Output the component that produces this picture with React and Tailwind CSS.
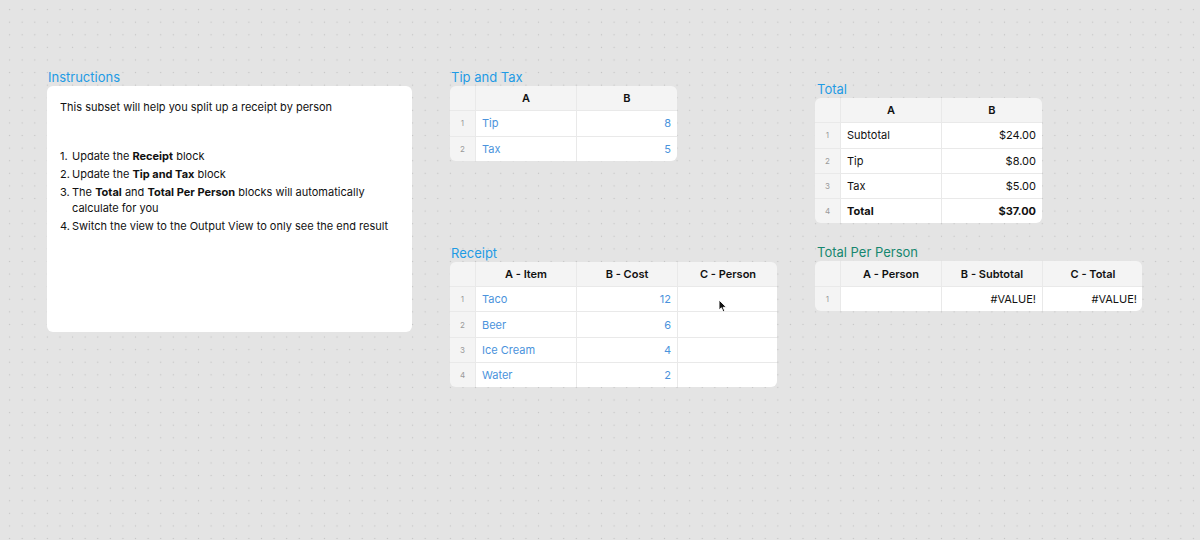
import React from 'react';

const BLUE = 'text-[#1f9be4]';

function Label({ children, color = BLUE, className = '' }) {
    return (
        <div className={`text-[13px] leading-4 h-[17px] ${color} ${className}`}>{children}</div>
    );
}

function Sheet({ cols, header, rows, gridCols, cursorAt }) {
    return (
        <div
            className={`grid ${gridCols} gap-px bg-[#e9e9e9] rounded-md overflow-hidden text-[11px] leading-4 relative`}
        >
            <div className="bg-[#f4f4f4] h-[24.3px]" />
            {header.map((h) => (
                <div key={h} className="bg-[#f4f4f4] h-[24.3px] flex items-center justify-center font-semibold text-[#111]">
                    {h}
                </div>
            ))}
            {rows.map((row, i) => (
                <React.Fragment key={i}>
                    <div className="bg-[#f4f4f4] h-[24.3px] flex items-center justify-center text-[8px] text-[#9a9a9a]">
                        {i + 1}
                    </div>
                    {row.map((cell, j) => (
                        <div
                            key={j}
                            className={`bg-white h-[24.3px] flex items-center px-1.5 ${
                                cols[j] === 'num' ? 'justify-end' : ''
                            } ${cell.tone === 'blue' ? 'text-[#4b93dc]' : 'text-[#111]'} ${
                                cell.bold ? 'font-bold' : ''
                            }`}
                        >
                            {cell.v}
                        </div>
                    ))}
                </React.Fragment>
            ))}
            {cursorAt && (
                <svg className="absolute" style={cursorAt} width="10" height="14" viewBox="0 0 10 14">
                    <path d="M1 1 L1 11 L3.4 8.8 L5.2 12.8 L6.8 12.1 L5.1 8.3 L8.4 8.3 Z" fill="#111" stroke="#fff" strokeWidth="0.9" />
                </svg>
            )}
        </div>
    );
}

const b = (v) => ({ v, tone: 'blue' });
const k = (v, bold) => ({ v, bold });

export default function App() {
    return (
        <div
            className="w-[1200px] h-[540px] bg-[#e4e4e4] overflow-hidden relative"
            style={{
                fontFamily: 'Inter, "Noto Sans", sans-serif',
                backgroundImage: 'radial-gradient(circle, #c4c4c4 0.7px, transparent 1px)',
                backgroundSize: '12.6px 12.6px',
                backgroundPosition: '3.3px 3.3px',
            }}
        >
            <div className="flex pt-[69px]">
                {/* column 1 */}
                <div className="ml-[47px] w-[365px]">
                    <Label className="pl-px">Instructions</Label>
                    <div className="bg-white rounded-md h-[246px] px-[13px] pt-[13px] text-[11px] leading-4 text-[#111]">
                        <p>This subset will help you split up a receipt by person</p>
                        <ol className="mt-[33px] flex flex-col gap-[2px]">
                            <li className="flex">
                                <span className="w-3 shrink-0">1.</span>
                                <span>Update the <b>Receipt</b> block</span>
                            </li>
                            <li className="flex">
                                <span className="w-3 shrink-0">2.</span>
                                <span>Update the <b>Tip and Tax</b> block</span>
                            </li>
                            <li className="flex">
                                <span className="w-3 shrink-0">3.</span>
                                <span>
                                    The <b>Total</b> and <b>Total Per Person</b> blocks will automatically
                                    <br />
                                    calculate for you
                                </span>
                            </li>
                            <li className="flex">
                                <span className="w-3 shrink-0">4.</span>
                                <span>Switch the view to the Output View to only see the end result</span>
                            </li>
                        </ol>
                    </div>
                </div>

                {/* column 2 */}
                <div className="ml-[38px] w-[327px]">
                    <Label className="pl-px">Tip and Tax</Label>
                    <div className="w-[227px]">
                        <Sheet
                            gridCols="grid-cols-[25px_100px_100px]"
                            cols={['text', 'num']}
                            header={['A', 'B']}
                            rows={[
                                [b('Tip'), b('8')],
                                [b('Tax'), b('5')],
                            ]}
                        />
                    </div>
                    <Label className="mt-[84px] pl-px">Receipt</Label>
                    <Sheet
                        gridCols="grid-cols-[25px_100px_100px_100px]"
                        cols={['text', 'num', 'text']}
                        header={['A - Item', 'B - Cost', 'C - Person']}
                        rows={[
                            [b('Taco'), b('12'), k('')],
                            [b('Beer'), b('6'), k('')],
                            [b('Ice Cream'), b('4'), k('')],
                            [b('Water'), b('2'), k('')],
                        ]}
                        cursorAt={{ left: '268px', top: '37px' }}
                    />
                </div>

                {/* column 3 */}
                <div className="ml-[38px] w-[327px] pt-[12px]">
                    <Label className="pl-0.5">Total</Label>
                    <div className="w-[227px]">
                        <Sheet
                            gridCols="grid-cols-[25px_100px_100px]"
                            cols={['text', 'num']}
                            header={['A', 'B']}
                            rows={[
                                [k('Subtotal'), k('$24.00')],
                                [k('Tip'), k('$8.00')],
                                [k('Tax'), k('$5.00')],
                                [k('Total', true), k('$37.00', true)],
                            ]}
                        />
                    </div>
                    <Label color="text-[#16876f]" className="mt-[21px] pl-0.5">Total Per Person</Label>
                    <Sheet
                        gridCols="grid-cols-[25px_100px_100px_100px]"
                        cols={['text', 'num', 'num']}
                        header={['A - Person', 'B - Subtotal', 'C - Total']}
                        rows={[[k(''), k('#VALUE!'), k('#VALUE!')]]}
                    />
                </div>
            </div>
        </div>
    );
}
